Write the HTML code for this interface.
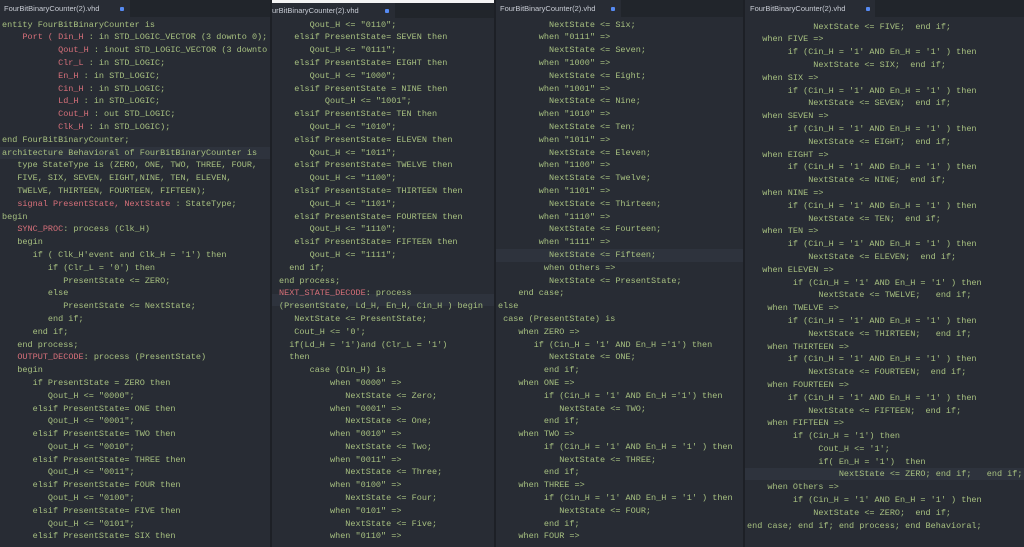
<!DOCTYPE html>
<html><head><meta charset="utf-8"><style>
*{margin:0;padding:0;box-sizing:border-box}
body{width:1024px;height:547px;overflow:hidden;background:#282c34;position:relative;font-family:"Liberation Mono",monospace}
.p{position:absolute;top:0;bottom:0;background:#282c34;overflow:hidden}
.tb{position:absolute;left:0;right:0;top:0;height:17px;background:#21252b}
.tab{position:absolute;top:0;height:17px;background:#282c34;font-family:"Liberation Sans",sans-serif;font-size:7.5px;color:#c8ccd4;line-height:17px;padding-left:4px;white-space:nowrap}
.dot{position:absolute;top:7px;width:4px;height:4px;background:#568af2;border-radius:1px}
pre{position:absolute;font-family:"Liberation Mono",monospace;font-size:8.5px;line-height:12.8px;color:#a7c080;white-space:pre}
.r{color:#d7707a}
.hl{position:absolute;left:0;right:0;height:12.8px;background:#2e333d}
.div{position:absolute;top:0;bottom:0;width:2px;background:#1d2026}
</style></head><body>
<div class="p" style="left:0;width:271px">
<div class="tb"></div><div class="tab" style="left:0;width:130px">FourBitBinaryCounter(2).vhd<div class="dot" style="left:120px"></div></div>
<div class="hl" style="top:146.6px"></div>
<pre style="left:2px;top:18.6px">entity FourBitBinaryCounter is
    <span class="r">Port ( Din_H</span> : in STD_LOGIC_VECTOR (3 downto 0);
           <span class="r">Qout_H</span> : inout STD_LOGIC_VECTOR (3 downto
           <span class="r">Clr_L</span> : in STD_LOGIC;
           <span class="r">En_H</span> : in STD_LOGIC;
           <span class="r">Cin_H</span> : in STD_LOGIC;
           <span class="r">Ld_H</span> : in STD_LOGIC;
           <span class="r">Cout_H</span> : out STD_LOGIC;
           <span class="r">Clk_H</span> : in STD_LOGIC);
end FourBitBinaryCounter;
architecture Behavioral of FourBitBinaryCounter is
   type StateType is (ZERO, ONE, TWO, THREE, FOUR,
   FIVE, SIX, SEVEN, EIGHT,NINE, TEN, ELEVEN,
   TWELVE, THIRTEEN, FOURTEEN, FIFTEEN);
   <span class="r">signal PresentState, NextState</span> : StateType;
begin
   <span class="r">SYNC_PROC</span>: process (Clk_H)
   begin
      if ( Clk_H'event and Clk_H = '1') then
         if (Clr_L = '0') then
            PresentState &lt;= ZERO;
         else
            PresentState &lt;= NextState;
         end if;
      end if;
   end process;
   <span class="r">OUTPUT_DECODE</span>: process (PresentState)
   begin
      if PresentState = ZERO then
         Qout_H &lt;= "0000";
      elsif PresentState= ONE then
         Qout_H &lt;= "0001";
      elsif PresentState= TWO then
         Qout_H &lt;= "0010";
      elsif PresentState= THREE then
         Qout_H &lt;= "0011";
      elsif PresentState= FOUR then
         Qout_H &lt;= "0100";
      elsif PresentState= FIVE then
         Qout_H &lt;= "0101";
      elsif PresentState= SIX then</pre>
</div>
<div class="div" style="left:270px"></div>
<div style="position:absolute;left:272px;top:0;width:224px;height:3px;background:#f4f4f4"></div>
<div class="p" style="left:272px;width:222px;top:3px">
<div class="tb" style="height:15px"></div><div class="tab" style="left:0;width:123px;height:15px;line-height:15px;padding-left:0">urBitBinaryCounter(2).vhd<div class="dot" style="left:113px;top:6px"></div></div>
<div class="hl" style="top:290.6px"></div>
<pre style="left:7px;top:15.6px">      Qout_H &lt;= "0110";
   elsif PresentState= SEVEN then
      Qout_H &lt;= "0111";
   elsif PresentState= EIGHT then
      Qout_H &lt;= "1000";
   elsif PresentState = NINE then
         Qout_H &lt;= "1001";
   elsif PresentState= TEN then
      Qout_H &lt;= "1010";
   elsif PresentState= ELEVEN then
      Qout_H &lt;= "1011";
   elsif PresentState= TWELVE then
      Qout_H &lt;= "1100";
   elsif PresentState= THIRTEEN then
      Qout_H &lt;= "1101";
   elsif PresentState= FOURTEEN then
      Qout_H &lt;= "1110";
   elsif PresentState= FIFTEEN then
      Qout_H &lt;= "1111";
  end if;
end process;
<span class="r">NEXT_STATE_DECODE</span>: process
(PresentState, Ld_H, En_H, Cin_H ) begin
   NextState &lt;= PresentState;
   Cout_H &lt;= '0';
  if(Ld_H = '1')and (Clr_L = '1')
  then
      case (Din_H) is
          when "0000" =&gt;
             NextState &lt;= Zero;
          when "0001" =&gt;
             NextState &lt;= One;
          when "0010" =&gt;
             NextState &lt;= Two;
          when "0011" =&gt;
             NextState &lt;= Three;
          when "0100" =&gt;
             NextState &lt;= Four;
          when "0101" =&gt;
             NextState &lt;= Five;
          when "0110" =&gt;</pre>
</div>
<div class="div" style="left:494px"></div>
<div class="p" style="left:496px;width:248px">
<div class="tb"></div><div class="tab" style="left:0;width:125px">FourBitBinaryCounter(2).vhd<div class="dot" style="left:115px"></div></div>
<div class="hl" style="top:249px"></div>
<pre style="left:2px;top:18.6px">          NextState &lt;= Six;
        when "0111" =&gt;
          NextState &lt;= Seven;
        when "1000" =&gt;
          NextState &lt;= Eight;
        when "1001" =&gt;
          NextState &lt;= Nine;
        when "1010" =&gt;
          NextState &lt;= Ten;
        when "1011" =&gt;
          NextState &lt;= Eleven;
        when "1100" =&gt;
          NextState &lt;= Twelve;
        when "1101" =&gt;
          NextState &lt;= Thirteen;
        when "1110" =&gt;
          NextState &lt;= Fourteen;
        when "1111" =&gt;
          NextState &lt;= Fifteen;
         when Others =&gt;
          NextState &lt;= PresentState;
    end case;
else
 case (PresentState) is
    when ZERO =&gt;
       if (Cin_H = '1' AND En_H ='1') then
          NextState &lt;= ONE;
         end if;
    when ONE =&gt;
         if (Cin_H = '1' AND En_H ='1') then
            NextState &lt;= TWO;
         end if;
    when TWO =&gt;
         if (Cin_H = '1' AND En_H = '1' ) then
            NextState &lt;= THREE;
         end if;
    when THREE =&gt;
         if (Cin_H = '1' AND En_H = '1' ) then
            NextState &lt;= FOUR;
         end if;
    when FOUR =&gt;</pre>
</div>
<div class="div" style="left:743px"></div>
<div class="p" style="left:745px;right:0">
<div class="tb"></div><div class="tab" style="left:0;width:130px;padding-left:5px">FourBitBinaryCounter(2).vhd<div class="dot" style="left:121px"></div></div>
<div class="hl" style="top:467.6px"></div>
<pre style="left:2px;top:20.6px">             NextState &lt;= FIVE;  end if;
   when FIVE =&gt;
        if (Cin_H = '1' AND En_H = '1' ) then
             NextState &lt;= SIX;  end if;
   when SIX =&gt;
        if (Cin_H = '1' AND En_H = '1' ) then
            NextState &lt;= SEVEN;  end if;
   when SEVEN =&gt;
        if (Cin_H = '1' AND En_H = '1' ) then
            NextState &lt;= EIGHT;  end if;
   when EIGHT =&gt;
        if (Cin_H = '1' AND En_H = '1' ) then
            NextState &lt;= NINE;  end if;
   when NINE =&gt;
        if (Cin_H = '1' AND En_H = '1' ) then
            NextState &lt;= TEN;  end if;
   when TEN =&gt;
        if (Cin_H = '1' AND En_H = '1' ) then
            NextState &lt;= ELEVEN;  end if;
   when ELEVEN =&gt;
         if (Cin_H = '1' AND En_H = '1' ) then
              NextState &lt;= TWELVE;   end if;
    when TWELVE =&gt;
        if (Cin_H = '1' AND En_H = '1' ) then
            NextState &lt;= THIRTEEN;   end if;
    when THIRTEEN =&gt;
        if (Cin_H = '1' AND En_H = '1' ) then
            NextState &lt;= FOURTEEN;  end if;
    when FOURTEEN =&gt;
        if (Cin_H = '1' AND En_H = '1' ) then
            NextState &lt;= FIFTEEN;  end if;
    when FIFTEEN =&gt;
         if (Cin_H = '1') then
              Cout_H &lt;= '1';
              if( En_H = '1')  then
                  NextState &lt;= ZERO; end if;   end if;
    when Others =&gt;
         if (Cin_H = '1' AND En_H = '1' ) then
             NextState &lt;= ZERO;  end if;
end case; end if; end process; end Behavioral;</pre>
</div>
</body></html>
